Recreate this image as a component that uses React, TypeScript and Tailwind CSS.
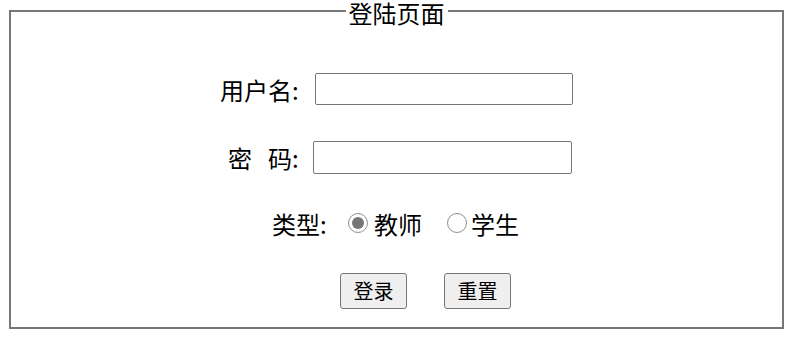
import React from "react";

function Radio({ checked }: { checked?: boolean }) {
  return checked ? (
    <span className="box-border flex h-[20px] w-[20px] shrink-0 items-center justify-center rounded-full border-[1.5px] border-[#8f8f8f] bg-white">
      <span className="block h-[12px] w-[12px] rounded-full bg-[#767676]" />
    </span>
  ) : (
    <span className="box-border block h-[20px] w-[20px] shrink-0 rounded-full border border-[#8f8f8f] bg-white" />
  );
}

export default function App() {
  return (
    <div className="min-h-[350px] w-[795px] bg-white pl-[9px] font-['Noto_Sans_CJK_SC',sans-serif] text-black">
      <fieldset className="box-border w-[775px] border-2 border-solid border-[#777777] pb-[18px]">
        <legend className="mx-auto px-[3px] pt-[4px] text-[24px] leading-[18px]">登陆页面</legend>
        <div className="flex flex-col">
          <div className="mt-[51px] flex h-[32px] items-center justify-center">
            <span className="w-[85px] pt-[2px] text-[24px] leading-[32px]">用户名:</span>
            <input
              type="text"
              className="ml-[10px] box-border h-[32px] w-[258px] rounded-[2px] border border-[#767676] bg-white px-[3px] outline-none"
            />
          </div>
          <div className="mt-[36px] flex h-[33px] items-center justify-center pl-[7px]">
            <span className="flex w-[75px] text-[24px] leading-[33px]">
              <span>密</span>
              <span className="ml-[16px]">码:</span>
            </span>
            <input
              type="password"
              className="ml-[10px] box-border h-[33px] w-[259px] rounded-[2px] border border-[#767676] bg-white px-[3px] outline-none"
            />
          </div>
          <div className="mt-[33px] flex h-[32px] items-center justify-center text-[24px] leading-[32px]">
            <span className="w-[56px] pt-[2px]">类型:</span>
            <span className="ml-[20px]">
              <Radio checked />
            </span>
            <span className="ml-[6px] w-[48px] pt-[2px]">教师</span>
            <span className="ml-[25px]">
              <Radio />
            </span>
            <span className="ml-[4px] w-[50px] pt-[2px]">学生</span>
          </div>
          <div className="mt-[34px] flex h-[36px] items-center justify-center gap-[37px] pl-[58px]">
            <button className="box-border h-[36px] w-[67px] rounded-[3px] border border-[#767676] bg-[#efefef] text-[20px] leading-[34px]">
              登录
            </button>
            <button className="box-border h-[36px] w-[67px] rounded-[3px] border border-[#767676] bg-[#efefef] text-[20px] leading-[34px]">
              重置
            </button>
          </div>
        </div>
      </fieldset>
    </div>
  );
}
